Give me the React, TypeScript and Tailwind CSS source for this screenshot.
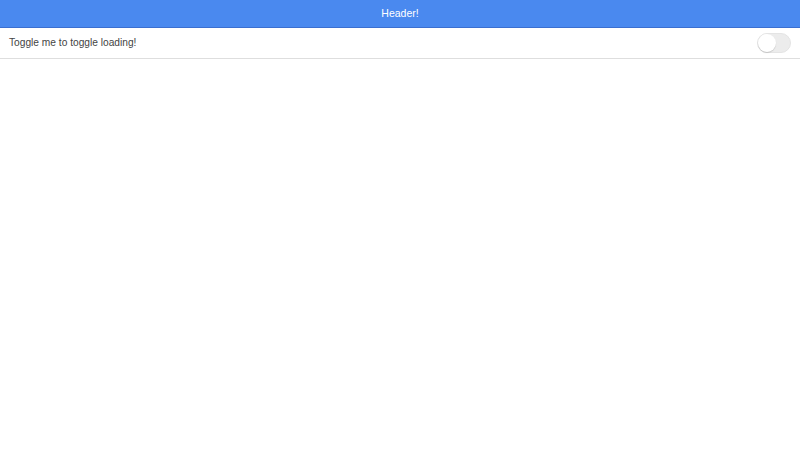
import { useState } from 'react';

export default function App() {
  const [loading, setLoading] = useState(false);

  return (
    <div className="min-h-screen bg-white font-['Liberation_Sans',Arial,sans-serif]">
      <div className="h-[28px] bg-[#4a89ef] border-b border-[#3b6fd0] flex items-center justify-center">
        <span className="text-white text-[10.5px]">Header!</span>
      </div>
      <div className="h-[31px] border-b border-[#dedede] flex items-center justify-between pl-[9px] pr-[9px]">
        <span className="text-[10.2px] text-[#444]">Toggle me to toggle loading!</span>
        <button
          onClick={() => setLoading(!loading)}
          className={`relative w-[34px] h-[20px] rounded-full border ${loading ? 'bg-[#4a89ef] border-[#4a89ef]' : 'bg-[#ececec] border-[#e4e4e4]'}`}
        >
          <span
            className={`absolute top-[0px] w-[18px] h-[18px] rounded-full bg-white shadow-[0_1px_1px_rgba(0,0,0,0.15)] ${loading ? 'left-[14px]' : 'left-[0px]'}`}
          />
        </button>
      </div>
    </div>
  );
}
